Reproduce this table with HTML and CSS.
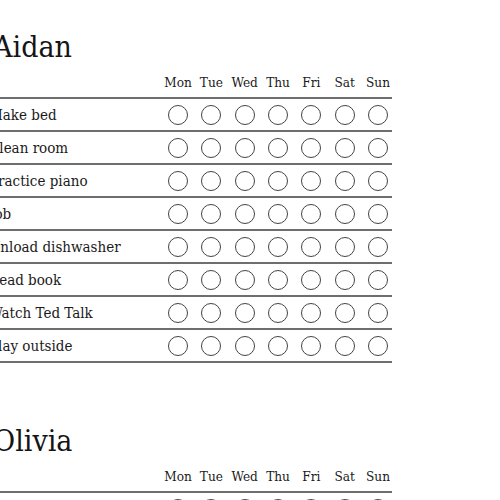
FILE: index.html
```html
<!DOCTYPE html>
<html>
<head>
<meta charset="utf-8">
<link rel="stylesheet" href="styles.css">
</head>
<body>
<div class="page">
  <section class="chart">
    <h1 class="name">Aidan</h1>
    <div class="head">
      <span class="task"></span>
      <span class="day">Mon</span><span class="day">Tue</span><span class="day">Wed</span><span class="day">Thu</span><span class="day">Fri</span><span class="day">Sat</span><span class="day">Sun</span>
    </div>
    <div class="row"><span class="task">Make bed</span><i class="c"></i><i class="c"></i><i class="c"></i><i class="c"></i><i class="c"></i><i class="c"></i><i class="c"></i></div>
    <div class="row"><span class="task">Clean room</span><i class="c"></i><i class="c"></i><i class="c"></i><i class="c"></i><i class="c"></i><i class="c"></i><i class="c"></i></div>
    <div class="row"><span class="task">Practice piano</span><i class="c"></i><i class="c"></i><i class="c"></i><i class="c"></i><i class="c"></i><i class="c"></i><i class="c"></i></div>
    <div class="row"><span class="task">Job</span><i class="c"></i><i class="c"></i><i class="c"></i><i class="c"></i><i class="c"></i><i class="c"></i><i class="c"></i></div>
    <div class="row"><span class="task">Unload dishwasher</span><i class="c"></i><i class="c"></i><i class="c"></i><i class="c"></i><i class="c"></i><i class="c"></i><i class="c"></i></div>
    <div class="row"><span class="task">Read book</span><i class="c"></i><i class="c"></i><i class="c"></i><i class="c"></i><i class="c"></i><i class="c"></i><i class="c"></i></div>
    <div class="row"><span class="task">Watch Ted Talk</span><i class="c"></i><i class="c"></i><i class="c"></i><i class="c"></i><i class="c"></i><i class="c"></i><i class="c"></i></div>
    <div class="row last"><span class="task">Play outside</span><i class="c"></i><i class="c"></i><i class="c"></i><i class="c"></i><i class="c"></i><i class="c"></i><i class="c"></i></div>
  </section>
  <section class="chart second">
    <h1 class="name">Olivia</h1>
    <div class="head">
      <span class="task"></span>
      <span class="day">Mon</span><span class="day">Tue</span><span class="day">Wed</span><span class="day">Thu</span><span class="day">Fri</span><span class="day">Sat</span><span class="day">Sun</span>
    </div>
    <div class="row"><span class="task">Make bed</span><i class="c"></i><i class="c"></i><i class="c"></i><i class="c"></i><i class="c"></i><i class="c"></i><i class="c"></i></div>
    <div class="row"><span class="task">Clean room</span><i class="c"></i><i class="c"></i><i class="c"></i><i class="c"></i><i class="c"></i><i class="c"></i><i class="c"></i></div>
  </section>
</div>
</body>
</html>
```

FILE: styles.css
```css
html, body {
  margin: 0;
  padding: 0;
  background: #fff;
  overflow: hidden;
}
body {
  font-family: "DejaVu Serif", "Liberation Serif", serif;
  font-stretch: condensed;
  color: #1a1a1a;
}
.page {
  margin-left: -13px;
  width: 405px;
  padding-top: 27px;
}
.name {
  margin: 0 0 0 6px;
  font-size: 30px;
  font-weight: normal;
  line-height: 40px;
  height: 40px;
  color: #151515;
}
.head,
.row {
  display: grid;
  grid-template-columns: 1fr repeat(7, 20px);
  column-gap: 13.33px;
  padding-right: 4px;
  box-sizing: border-box;
}
.head {
  height: 30px;
  line-height: 30px;
  font-size: 13.5px;
}
.day {
  display: flex;
  justify-content: center;
  white-space: nowrap;
}
.row {
  align-items: center;
  height: 33px;
  border-top: 2px solid #6e6e6e;
  font-size: 15px;
}
.row .task {
  padding-left: 2px;
  white-space: nowrap;
}
.row.last {
  height: 35px;
  border-bottom: 2px solid #6e6e6e;
}
.c {
  display: block;
  width: 20px;
  height: 20px;
  box-sizing: border-box;
  border: 1.5px solid #444;
  border-radius: 50%;
}
.second {
  margin-top: 58px;
}
```
